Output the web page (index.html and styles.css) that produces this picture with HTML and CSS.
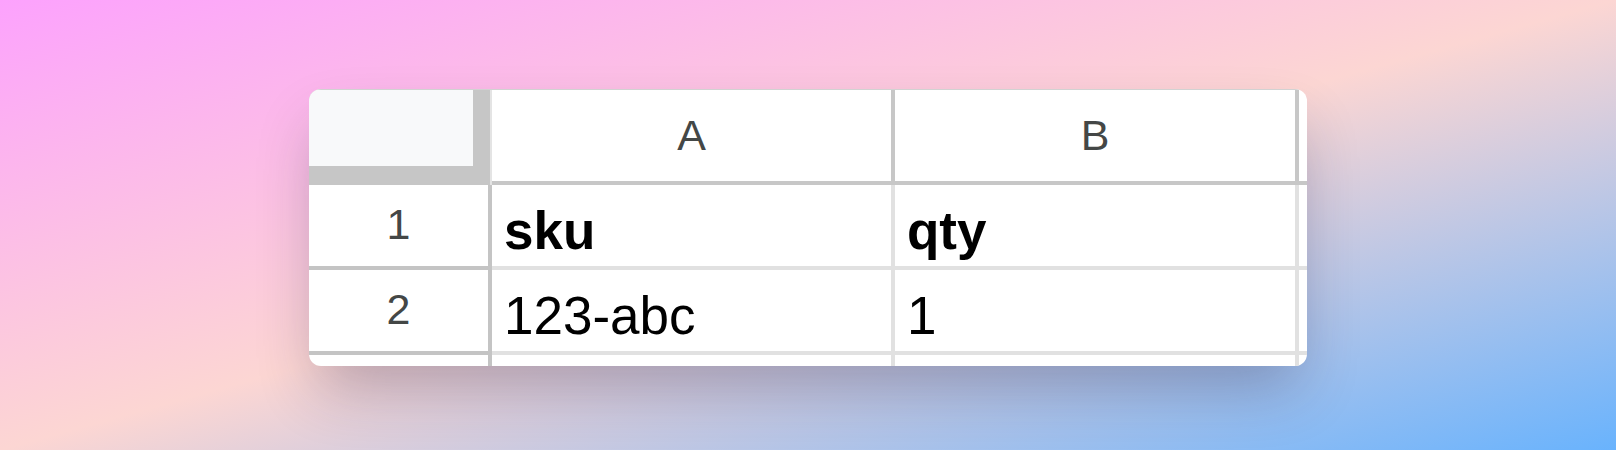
FILE: index.html
```html
<!DOCTYPE html>
<html lang="en">
<head>
<meta charset="utf-8">
<title>Sheet</title>
<link rel="stylesheet" href="styles.css">
</head>
<body>
<main class="stage">
  <div class="card">
    <div class="sheet">
      <div class="row head-row">
        <div class="corner"><div class="corner-inner"></div></div>
        <div class="cell col-head col-a">A</div>
        <div class="cell col-head col-b">B</div>
        <div class="cell col-head col-c"></div>
      </div>
      <div class="row data-row">
        <div class="row-head">1</div>
        <div class="cell data col-a bold">sku</div>
        <div class="cell data col-b bold">qty</div>
        <div class="cell data col-c"></div>
      </div>
      <div class="row data-row">
        <div class="row-head">2</div>
        <div class="cell data col-a">123-abc</div>
        <div class="cell data col-b">1</div>
        <div class="cell data col-c"></div>
      </div>
      <div class="row data-row">
        <div class="row-head"></div>
        <div class="cell data col-a"></div>
        <div class="cell data col-b"></div>
        <div class="cell data col-c"></div>
      </div>
    </div>
  </div>
</main>
</body>
</html>
```

FILE: styles.css
```css
* { box-sizing: border-box; }

html, body {
  margin: 0;
  padding: 0;
  height: 100%;
}

body {
  font-family: "Liberation Sans", Arial, sans-serif;
  background: linear-gradient(to bottom right, #fca2fd 0%, #fcd6d3 50%, #69b3fd 100%);
  overflow: hidden;
}

.stage {
  height: 100vh;
  padding-top: 4px;
  display: flex;
  align-items: center;
  justify-content: center;
}

.card {
  width: 998px;
  height: 277px;
  background: #ffffff;
  border-radius: 12px;
  overflow: hidden;
  box-shadow: 0 30px 60px -10px rgba(30, 30, 70, 0.3);
}

.sheet {
  display: flex;
  flex-direction: column;
  border-top: 1px solid #d2d2d2;
}

.row {
  display: flex;
  flex-shrink: 0;
}

.head-row { height: 95px; }
.data-row { height: 85px; }

.corner {
  width: 183px;
  flex-shrink: 0;
  background: #c6c6c6;
  border-right: 2px solid #e4e4e4;
}

.corner-inner {
  width: 164px;
  height: 76px;
  background: #f8f9fa;
}

.cell {
  flex-shrink: 0;
  border-right: 4px solid #e1e1e1;
  border-bottom: 4px solid #e1e1e1;
}

.col-a { width: 403px; }
.col-b { width: 404px; }
.col-c { flex: 1; border-right: none; }

.col-head {
  display: flex;
  align-items: center;
  justify-content: center;
  font-size: 43px;
  color: #444746;
  border-color: #c7c7c7;
}

.row-head {
  width: 183px;
  flex-shrink: 0;
  display: flex;
  align-items: center;
  justify-content: center;
  font-size: 43px;
  color: #444746;
  border-right: 4px solid #c4c4c4;
  border-bottom: 4px solid #c4c4c4;
  padding-bottom: 2px;
}

.data {
  display: flex;
  align-items: flex-end;
  padding: 0 12px 5px;
  font-size: 53px;
  color: #000000;
}

.bold { font-weight: 700; }
```
